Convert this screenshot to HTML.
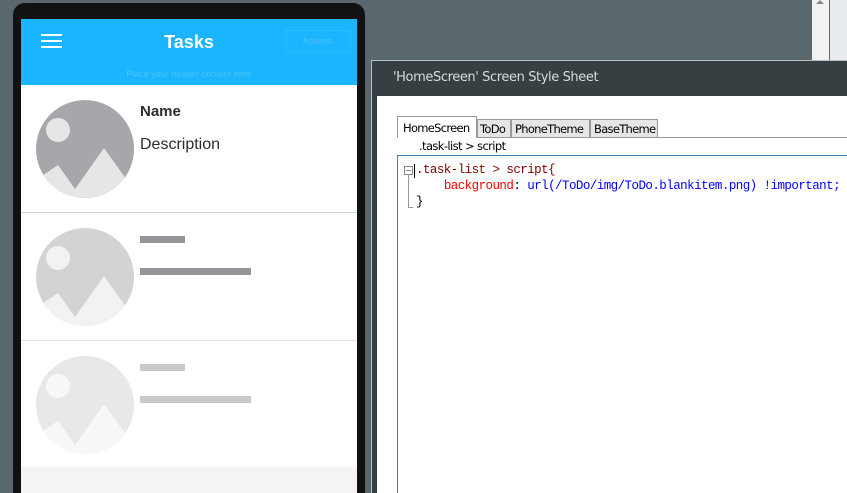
<!DOCTYPE html>
<html><head><style>
*{margin:0;padding:0;box-sizing:border-box}
html,body{width:847px;height:493px;overflow:hidden}
body{background:#5a676d;position:relative;font-family:"Liberation Sans",sans-serif}
.a{position:absolute}
.bar{position:absolute;height:7px;background:#949699}
.bar2{background:#c8cacc}
</style></head><body>
<div class="a" style="left:812px;top:0;width:17px;height:60px;background:#f2f2f2"></div>
<div class="a" style="left:816px;top:0;width:0;height:0;border-left:4px solid transparent;border-right:4px solid transparent;border-bottom:4px solid #888"></div>
<div class="a" style="left:829px;top:0;width:1px;height:60px;background:#666"></div>
<div class="a" style="left:830px;top:0;width:17px;height:60px;background:#e8ecef"></div>

<div class="a" style="left:13px;top:3px;width:352px;height:490px;background:#111;border-radius:12px 12px 0 0"></div>
<div class="a" style="left:21px;top:19px;width:336px;height:474px;background:#fff;overflow:hidden">
  <div class="a" style="left:0;top:0;width:336px;height:66px;background:#1ab4ff"></div>
  <div class="a" style="left:20px;top:15px;width:21px;height:2px;background:#fff"></div>
  <div class="a" style="left:20px;top:21px;width:21px;height:2px;background:#fff"></div>
  <div class="a" style="left:20px;top:27px;width:21px;height:2px;background:#fff"></div>
  <div class="a" style="left:0;top:13px;width:336px;text-align:center;color:#fff;font-size:18px;font-weight:bold">Tasks</div>
  <div class="a" style="left:264px;top:11px;width:65px;height:22px;border:1px dotted #3cc0ff;color:#48c4ff;font-size:9px;text-align:center;line-height:20px">Actions</div>
  <div class="a" style="left:0;top:50px;width:336px;text-align:center;color:#48c4ff;font-size:9px">Place your header content here</div>
  <svg class="a" style="left:15px;top:81px" width="98" height="98" viewBox="0 0 98 98"><clipPath id="c1"><circle cx="49" cy="49" r="49"/></clipPath><g clip-path="url(#c1)"><rect width="98" height="98" fill="#a6a7aa"/><circle cx="22" cy="30" r="12" fill="#e6e6e7"/><path d="M0 80 L22 65 L39 89 L68 48 L98 90 L98 98 L0 98Z" fill="#e6e6e7"/></g></svg>
  <div class="a" style="left:119px;top:84px;font-size:15px;font-weight:bold;color:#2a2d30">Name</div>
  <div class="a" style="left:119px;top:117px;font-size:16px;color:#2a2d30">Description</div>
  <div class="a" style="left:0;top:193px;width:336px;height:1px;background:#cfd6dd"></div>
  <svg class="a" style="left:15px;top:209px" width="98" height="98" viewBox="0 0 98 98"><clipPath id="c2"><circle cx="49" cy="49" r="49"/></clipPath><g clip-path="url(#c2)"><rect width="98" height="98" fill="#d2d3d5"/><circle cx="22" cy="30" r="12" fill="#f2f2f2"/><path d="M0 80 L22 65 L39 89 L68 48 L98 90 L98 98 L0 98Z" fill="#f2f2f2"/></g></svg>
  <div class="bar" style="left:119px;top:217px;width:45px"></div>
  <div class="bar" style="left:119px;top:249px;width:111px"></div>
  <div class="a" style="left:0;top:321px;width:336px;height:1px;background:#e0e6e8"></div>
  <svg class="a" style="left:15px;top:337px" width="98" height="98" viewBox="0 0 98 98"><clipPath id="c3"><circle cx="49" cy="49" r="49"/></clipPath><g clip-path="url(#c3)"><rect width="98" height="98" fill="#e7e8e9"/><circle cx="22" cy="30" r="12" fill="#f8f8f8"/><path d="M0 80 L22 65 L39 89 L68 48 L98 90 L98 98 L0 98Z" fill="#f8f8f8"/></g></svg>
  <div class="bar bar2" style="left:119px;top:345px;width:45px"></div>
  <div class="bar bar2" style="left:119px;top:377px;width:111px"></div>
  <div class="a" style="left:0;top:448px;width:336px;height:26px;background:#f4f4f4"></div>
</div>

<div class="a" style="left:371px;top:60px;width:476px;height:433px;background:#363f42;border-left:1px solid #b8c0c4;border-top:1px solid #b8c0c4"></div>
<div class="a" style="left:393px;top:70px;color:#d8dcdd;font-size:13px;font-family:'DejaVu Sans',sans-serif;letter-spacing:-0.4px">'HomeScreen' Screen Style Sheet</div>
<div class="a" style="left:377px;top:96px;width:470px;height:397px;background:#fff"></div>
<div class="a" style="left:397px;top:137px;width:450px;height:1px;background:#999"></div>
<div class="a" style="left:397px;top:116px;width:80px;height:22px;background:#fff;border:1px solid #999;border-bottom:none;font-size:11.5px;padding:4px 0 0 5px;font-family:'DejaVu Sans',sans-serif;letter-spacing:-0.7px">HomeScreen</div>
<div class="a" style="left:477px;top:119px;width:34px;height:19px;background:#e6e6e6;border:1px solid #999;font-size:11.5px;padding:2px 0 0 2px;font-family:'DejaVu Sans',sans-serif;letter-spacing:-0.7px">ToDo</div>
<div class="a" style="left:511px;top:119px;width:79px;height:19px;background:#e6e6e6;border:1px solid #999;font-size:11.5px;padding:2px 0 0 3px;font-family:'DejaVu Sans',sans-serif;letter-spacing:-0.7px">PhoneTheme</div>
<div class="a" style="left:590px;top:119px;width:68px;height:19px;background:#e6e6e6;border:1px solid #999;font-size:11.5px;padding:2px 0 0 3px;font-family:'DejaVu Sans',sans-serif;letter-spacing:-0.7px">BaseTheme</div>
<div class="a" style="left:419px;top:139px;font-size:11.5px;font-family:'DejaVu Sans',sans-serif;letter-spacing:-0.6px">.task-list &gt; script</div>
<div class="a" style="left:397px;top:155px;width:450px;height:338px;border-left:1px solid #3c7fb1;border-top:1px solid #3c7fb1"></div>
<div class="a" style="left:404px;top:166px;width:9px;height:9px;border:1px solid #888"></div>
<div class="a" style="left:406px;top:170px;width:5px;height:1px;background:#888"></div>
<div class="a" style="left:408px;top:175px;width:1px;height:33px;background:#999"></div>
<div class="a" style="left:408px;top:207px;width:5px;height:1px;background:#999"></div>
<div class="a" style="left:414px;top:164px;width:1px;height:14px;background:#000"></div>
<pre class="a" style="left:416px;top:162px;font-family:'Liberation Mono',monospace;font-size:12.5px;line-height:16px;color:#800000;letter-spacing:-0.55px">.task-list &gt; script{
    <span style="color:#f00">background</span><span style="color:#000">:</span> <span style="color:#00f">url(/ToDo/img/ToDo.blankitem.png) !important;</span>
<span style="color:#000">}</span></pre>
</body></html>
